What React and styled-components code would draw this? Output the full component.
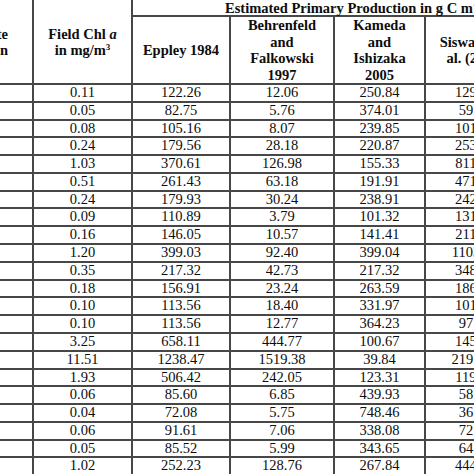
import React from "react";
import styled, { createGlobalStyle } from "styled-components";

const GlobalStyle = createGlobalStyle`
  html, body {
    margin: 0;
    padding: 0;
    background: #fff;
    overflow: hidden;
  }
  body {
    font-family: "Liberation Serif", "Times New Roman", serif;
    color: #0d0d0d;
  }
`;

const Frame = styled.div`
  width: 474px;
  height: 474px;
  overflow: hidden;
  background: #fff;
`;

const Table = styled.table`
  border-collapse: collapse;
  table-layout: fixed;
  width: 602px;
  margin-left: -78px;
  margin-top: -2px;
  font-size: 14.5px;
`;

const HeadCell = styled.th`
  border: 2px solid #474747;
  padding: 0;
  padding-top: ${(p) => p.$padTop || 0}px;
  font-size: 14.5px;
  font-weight: bold;
  line-height: ${(p) => p.$lh || 16}px;
  text-align: ${(p) => p.$align || "center"};
  vertical-align: middle;
  white-space: ${(p) => (p.$nowrap ? "nowrap" : "normal")};
  padding-left: ${(p) => p.$indent || 0}px;
  padding-right: ${(p) => p.$padRight || 0}px;
`;

const Row = styled.tr``;

const Cell = styled.td`
  border: 2px solid #474747;
  padding: 0;
  font-size: 14.5px;
  line-height: 15.78px;
  text-align: center;
  white-space: nowrap;
  overflow: hidden;
`;

const Sup = styled.sup`
  font-size: 9px;
  line-height: 0;
  vertical-align: 5px;
`;

const widths = [110, 99, 98, 104, 91, 100];

const rows = [
  ["0.11", "122.26", "12.06", "250.84", "129.41"],
  ["0.05", "82.75", "5.76", "374.01", "59.36"],
  ["0.08", "105.16", "8.07", "239.85", "101.72"],
  ["0.24", "179.56", "28.18", "220.87", "253.19"],
  ["1.03", "370.61", "126.98", "155.33", "811.27"],
  ["0.51", "261.43", "63.18", "191.91", "471.05"],
  ["0.24", "179.93", "30.24", "238.91", "242.63"],
  ["0.09", "110.89", "3.79", "101.32", "131.84"],
  ["0.16", "146.05", "10.57", "141.41", "211.56"],
  ["1.20", "399.03", "92.40", "399.04", "1103.28"],
  ["0.35", "217.32", "42.73", "217.32", "348.90"],
  ["0.18", "156.91", "23.24", "263.59", "186.47"],
  ["0.10", "113.56", "18.40", "331.97", "101.15"],
  ["0.10", "113.56", "12.77", "364.23", "97.62"],
  ["3.25", "658.11", "444.77", "100.67", "145.33"],
  ["11.51", "1238.47", "1519.38", "39.84", "2197.81"],
  ["1.93", "506.42", "242.05", "123.31", "119.54"],
  ["0.06", "85.60", "6.85", "439.93", "58.29"],
  ["0.04", "72.08", "5.75", "748.46", "36.18"],
  ["0.06", "91.61", "7.06", "338.08", "72.40"],
  ["0.05", "85.52", "5.99", "343.65", "64.77"],
  ["1.02", "252.23", "128.76", "267.84", "444.06"],
];

export default function App() {
  return (
    <Frame>
      <GlobalStyle />
      <Table>
        <colgroup>
          {widths.map((w, i) => (
            <col key={i} style={{ width: w }} />
          ))}
        </colgroup>
        <thead>
          <Row>
            <HeadCell rowSpan={2} $align="right" $padRight={24}>
              Sampling site
              <br />
              Location
            </HeadCell>
            <HeadCell rowSpan={2}>
              Field Chl <i>a</i>
              <br />
              in mg/m<Sup>3</Sup>
            </HeadCell>
            <HeadCell colSpan={4} $align="left" $indent={92} $lh={13} $padTop={2} $nowrap>
              Estimated Primary Production in g C m<Sup>−2</Sup> y<Sup>−1</Sup>
            </HeadCell>
          </Row>
          <Row>
            <HeadCell $lh={16.5}>Eppley 1984</HeadCell>
            <HeadCell $lh={16.5}>
              Behrenfeld
              <br />
              and
              <br />
              Falkowski
              <br />
              1997
            </HeadCell>
            <HeadCell $lh={16.5}>
              Kameda
              <br />
              and
              <br />
              Ishizaka
              <br />
              2005
            </HeadCell>
            <HeadCell $lh={16.5}>
              Siswanto et
              <br />
              al. (2006)
            </HeadCell>
          </Row>
        </thead>
        <tbody>
          {rows.map((r, i) => (
            <Row key={i}>
              <Cell />
              {r.map((v, j) => (
                <Cell key={j}>{v}</Cell>
              ))}
            </Row>
          ))}
        </tbody>
      </Table>
    </Frame>
  );
}
